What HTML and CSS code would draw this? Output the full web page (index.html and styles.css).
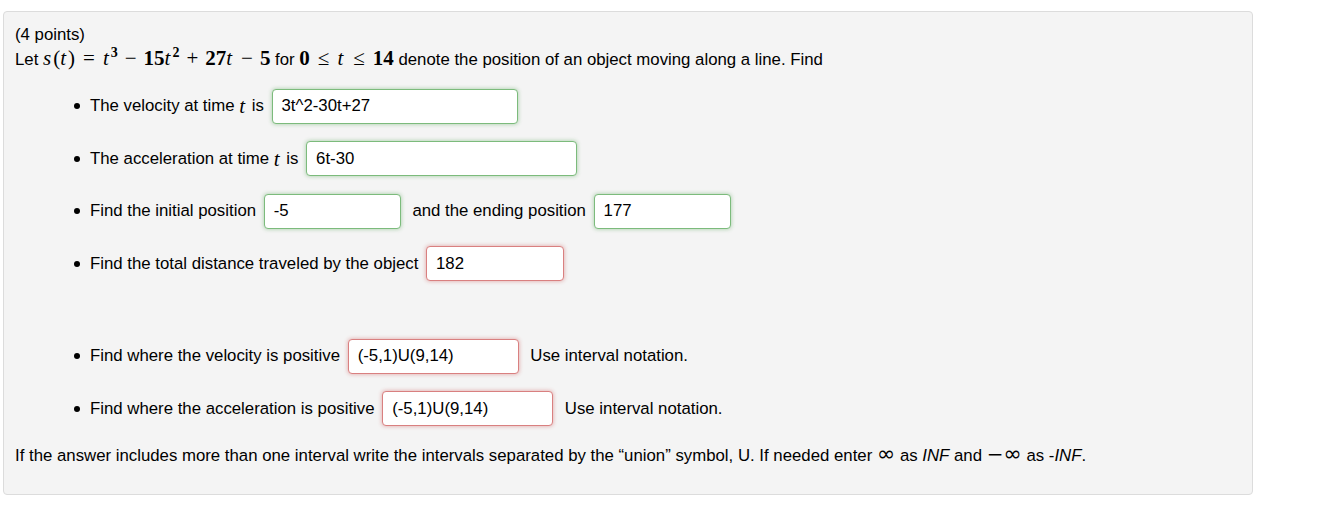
FILE: index.html
```html
<!DOCTYPE html>
<html>
<head>
<meta charset="utf-8">
<link rel="stylesheet" href="styles.css">
</head>
<body>
<div class="panel">
  <div class="points">(4 points)</div>
  <div class="intro">Let <span class="m"><i>s</i>(<i>t</i>)<span class="rel">=</span><i>t</i><sup>3</sup><span class="bin">−</span><b>15</b><i>t</i><sup>2</sup><span class="bin">+</span><b>27</b><i>t</i><span class="bin">−</span><b>5</b></span> for <span class="m"><b>0</b><span class="rel">≤</span><i>t</i><span class="rel">≤</span><b>14</b></span> denote the position of an object moving along a line. Find</div>
  <ul class="items">
    <li>The velocity at time&nbsp;<span class="m"><i>t</i></span>&nbsp;is <span class="ans ok w245">3t^2-30t+27</span></li>
    <li>The acceleration at time&nbsp;<span class="m"><i>t</i></span>&nbsp;is <span class="ans ok w270">6t-30</span></li>
    <li>Find the initial position <span class="ans ok w136">-5</span> and the ending position <span class="ans ok w136">177</span></li>
    <li>Find the total distance traveled by the object <span class="ans bad w137">182</span></li>
    <li class="spaced">Find where the velocity is positive <span class="ans bad w170">(-5,1)U(9,14)</span> Use interval notation.</li>
    <li>Find where the acceleration is positive <span class="ans bad w170">(-5,1)U(9,14)</span> Use interval notation.</li>
  </ul>
  <p class="note">If the answer includes more than one interval write the intervals separated by the “union” symbol, U. If needed enter <span class="inf">∞</span> as <i>INF</i> and <span class="inf"><span class="neg">−</span>∞</span> as -<i>INF</i>.</p>
</div>
</body>
</html>
```

FILE: styles.css
```css
html, body {
  margin: 0;
  padding: 0;
  background: #fff;
}
body {
  font-family: "Liberation Sans", Arial, sans-serif;
  font-size: 16.8px;
  color: #000;
  padding: 11px 0 0 3px;
}
.panel {
  width: 1226px;
  background: #f4f4f4;
  border: 1px solid #dcdcdc;
  border-radius: 4px;
  padding: 13px 11px 28px 11px;
}
.points {
  line-height: 20px;
}
.intro {
  line-height: 30px;
  height: 30px;
}
.m {
  font-family: "Liberation Serif", "Times New Roman", serif;
  font-size: 21px;
  line-height: 20px;
  white-space: nowrap;
}
.m i {
  font-style: italic;
  padding-right: 2px;
}
.m b {
  font-weight: bold;
}
.m sup {
  font-size: 14px;
  line-height: 0;
  vertical-align: 8px;
  font-weight: bold;
}
.rel {
  margin: 0 8px;
}
.bin {
  margin: 0 7px;
}
.items {
  list-style: none;
  margin: 14px 0 0 0;
  padding: 0 0 0 59px;
}
.items li {
  display: flex;
  align-items: center;
  height: 34px;
  margin-bottom: 18.5px;
  white-space: pre;
}
.items li::before {
  content: "";
  width: 6px;
  height: 6px;
  border-radius: 50%;
  background: #000;
  margin-right: 10px;
  flex: none;
}
.items li.spaced {
  margin-top: 58.5px;
}
.items li:last-child {
  margin-bottom: 0;
}
.ans {
  display: flex;
  align-items: center;
  box-sizing: border-box;
  height: 35px;
  margin: 0 7px 0 3px;
  padding: 0 9px;
  background: #fff;
  border-radius: 4px;
  flex: none;
  font-size: 16.8px;
}
.ok {
  border: 1px solid #7cbb7c;
  box-shadow: 0 0 4px rgba(60, 150, 60, 0.45);
}
.bad {
  border: 1px solid #d98080;
  box-shadow: 0 0 4px rgba(200, 60, 60, 0.45);
}
.w245 { width: 246px; }
.w270 { width: 271px; }
.w136 { width: 137px; }
.w137 { width: 138px; }
.w170 { width: 171px; }
.note {
  margin: 20px 0 0 0;
  line-height: 20px;
  height: 20px;
}
.inf {
  font-family: "DejaVu Sans", sans-serif;
  font-size: 22px;
  line-height: 0;
}
.neg {
  font-size: 20px;
}
```
